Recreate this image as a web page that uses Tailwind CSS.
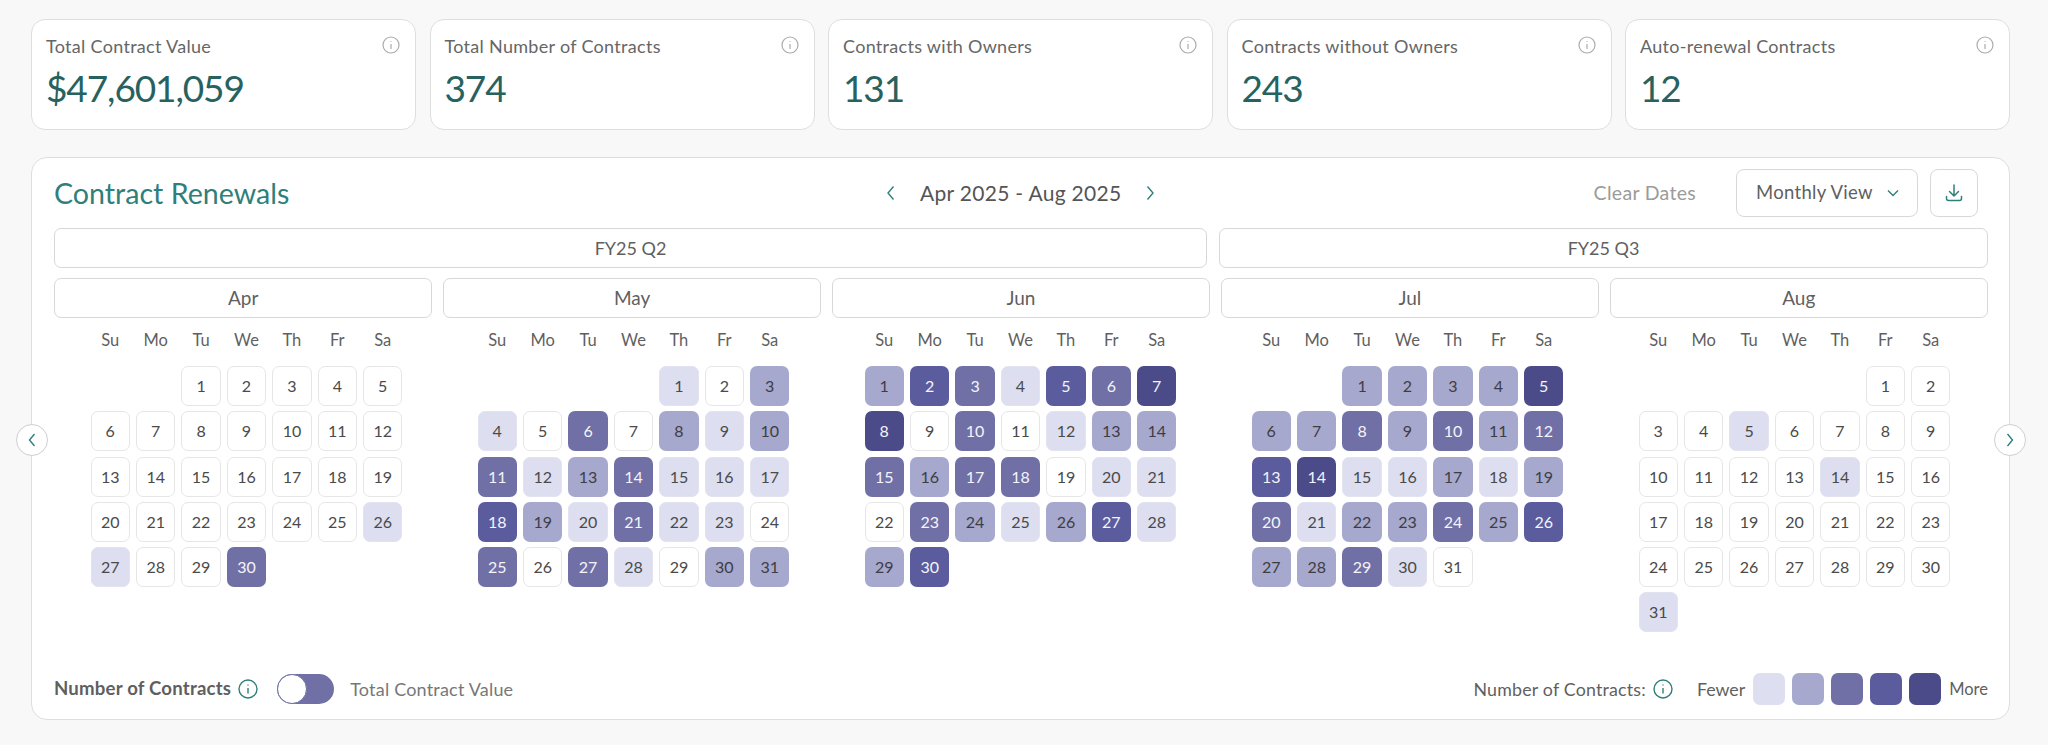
<!DOCTYPE html>
<html lang="en">
  <head>
    <meta charset="UTF-8" />
    <title>Contract Renewals</title>
    <script src="https://cdn.jsdelivr.net/npm/@tailwindcss/browser@4"></script>
  </head>
  <body class="h-[745px] overflow-hidden bg-[#f8f8f8] font-['Lato',sans-serif] text-[#5f5f5f]">
    <div class="relative w-[1979px] ml-[31px] pt-[19px]">
      <!-- Stat cards -->
      <div class="grid grid-cols-5 gap-[13.5px]">
        <div class="relative h-[111px] bg-white border border-[#dedede] rounded-[14px] pl-[14px] pt-[14px]">
          <p class="text-[18px] leading-[24px] tracking-[0.3px] text-[#666]">Total Contract Value</p>
          <p class="mt-[8px] text-[37px] leading-[44px] tracking-[-1.1px] text-[#27625f]">$47,601,059</p>
          <svg class="absolute right-[15px] top-[16px] w-[18px] h-[18px] text-[#ababab]" viewBox="0 0 18 18" fill="none" stroke="currentColor" stroke-width="1.2"><circle cx="9" cy="9" r="8"/><path d="M9 8v5M9 5v.8"/></svg>
        </div>
        <div class="relative h-[111px] bg-white border border-[#dedede] rounded-[14px] pl-[14px] pt-[14px]">
          <p class="text-[18px] leading-[24px] tracking-[0.3px] text-[#666]">Total Number of Contracts</p>
          <p class="mt-[8px] text-[37px] leading-[44px] tracking-[-1.1px] text-[#27625f]">374</p>
          <svg class="absolute right-[15px] top-[16px] w-[18px] h-[18px] text-[#ababab]" viewBox="0 0 18 18" fill="none" stroke="currentColor" stroke-width="1.2"><circle cx="9" cy="9" r="8"/><path d="M9 8v5M9 5v.8"/></svg>
        </div>
        <div class="relative h-[111px] bg-white border border-[#dedede] rounded-[14px] pl-[14px] pt-[14px]">
          <p class="text-[18px] leading-[24px] tracking-[0.3px] text-[#666]">Contracts with Owners</p>
          <p class="mt-[8px] text-[37px] leading-[44px] tracking-[-1.1px] text-[#27625f]">131</p>
          <svg class="absolute right-[15px] top-[16px] w-[18px] h-[18px] text-[#ababab]" viewBox="0 0 18 18" fill="none" stroke="currentColor" stroke-width="1.2"><circle cx="9" cy="9" r="8"/><path d="M9 8v5M9 5v.8"/></svg>
        </div>
        <div class="relative h-[111px] bg-white border border-[#dedede] rounded-[14px] pl-[14px] pt-[14px]">
          <p class="text-[18px] leading-[24px] tracking-[0.3px] text-[#666]">Contracts without Owners</p>
          <p class="mt-[8px] text-[37px] leading-[44px] tracking-[-1.1px] text-[#27625f]">243</p>
          <svg class="absolute right-[15px] top-[16px] w-[18px] h-[18px] text-[#ababab]" viewBox="0 0 18 18" fill="none" stroke="currentColor" stroke-width="1.2"><circle cx="9" cy="9" r="8"/><path d="M9 8v5M9 5v.8"/></svg>
        </div>
        <div class="relative h-[111px] bg-white border border-[#dedede] rounded-[14px] pl-[14px] pt-[14px]">
          <p class="text-[18px] leading-[24px] tracking-[0.3px] text-[#666]">Auto-renewal Contracts</p>
          <p class="mt-[8px] text-[37px] leading-[44px] tracking-[-1.1px] text-[#27625f]">12</p>
          <svg class="absolute right-[15px] top-[16px] w-[18px] h-[18px] text-[#ababab]" viewBox="0 0 18 18" fill="none" stroke="currentColor" stroke-width="1.2"><circle cx="9" cy="9" r="8"/><path d="M9 8v5M9 5v.8"/></svg>
        </div>
      </div>

      <!-- Contract Renewals panel -->
      <div class="relative mt-[27px] h-[563px] flex flex-col bg-white border border-[#dedede] rounded-[16px] pl-[22px] pr-[21px] pt-[11px] pb-[14px]">
        <div class="flex items-center h-[48px]">
          <h2 class="w-[828px] text-[28.6px] text-[#2f7f7b]">Contract Renewals</h2>
          <svg class="w-[18px] h-[20px] text-[#2f7f7b]" viewBox="0 0 18 20" fill="none" stroke="currentColor" stroke-width="1.4"><path d="M11.5 3.5 6 10l5.5 6.5"/></svg>
          <span class="ml-[20px] text-[21px] tracking-[0.3px] text-[#555]">Apr 2025 - Aug 2025</span>
          <svg class="ml-[20px] w-[18px] h-[20px] text-[#2f7f7b]" viewBox="0 0 18 20" fill="none" stroke="currentColor" stroke-width="1.4"><path d="M6.5 3.5 12 10l-5.5 6.5"/></svg>
          <span class="ml-auto text-[19.5px] tracking-[0.3px] text-[#9b9b9b]">Clear Dates</span>
          <div class="ml-[40px] w-[182px] h-[48px] flex items-center justify-between pl-[19px] pr-[17px] border border-[#d8d8d8] rounded-[8px]">
            <span class="text-[18.5px] tracking-[0.3px] text-[#5f5f5f]">Monthly View</span>
            <svg class="w-[14px] h-[14px] text-[#2f7f7b]" viewBox="0 0 14 14" fill="none" stroke="currentColor" stroke-width="1.4"><path d="m2 4.5 5 5 5-5"/></svg>
          </div>
          <div class="ml-[12px] mr-[10px] w-[48px] h-[48px] flex items-center justify-center border border-[#d8d8d8] rounded-[8px]">
            <svg class="w-[20px] h-[20px] text-[#2f7f7b]" viewBox="0 0 20 20" fill="none" stroke="currentColor" stroke-width="1.5" stroke-linecap="round" stroke-linejoin="round"><path d="M10 2v11M5.5 8.5 10 13l4.5-4.5M2.5 13.500v2a2 2 0 0 0 2 2h11a2 2 0 0 0 2-2v-2"/></svg>
          </div>
        </div>

        <div class="mt-[11px] grid grid-cols-[1153px_769px] gap-[12px] text-[18px] text-center">
          <div class="h-[40px] leading-[38px] border border-[#d8d8d8] rounded-[7px]">FY25 Q2</div>
          <div class="h-[40px] leading-[38px] border border-[#d8d8d8] rounded-[7px]">FY25 Q3</div>
        </div>
        <div class="mt-[10px] grid grid-cols-5 gap-[10.5px] text-[19px] text-center">
          <div class="h-[40px] leading-[38px] border border-[#d8d8d8] rounded-[7px]">Apr</div>
          <div class="h-[40px] leading-[38px] border border-[#d8d8d8] rounded-[7px]">May</div>
          <div class="h-[40px] leading-[38px] border border-[#d8d8d8] rounded-[7px]">Jun</div>
          <div class="h-[40px] leading-[38px] border border-[#d8d8d8] rounded-[7px]">Jul</div>
          <div class="h-[40px] leading-[38px] border border-[#d8d8d8] rounded-[7px]">Aug</div>
        </div>

        <!-- Month calendars, filled in below -->
        <div id="calendars" class="mt-[12px] pl-[36.5px] flex gap-[75px]"></div>

        <!-- Footer -->
        <div class="mt-auto flex items-center h-[32px]">
          <span class="text-[18.6px] font-bold tracking-[0.2px] text-[#5f5f5f]">Number of Contracts</span>
          <svg class="ml-[7px] w-[20px] h-[20px] text-[#2f7f7b]" viewBox="0 0 20 20" fill="none" stroke="currentColor" stroke-width="1.4"><circle cx="10" cy="10" r="9"/><path d="M10 9v5.5M10 5.5v.9"/></svg>
          <div class="ml-[19px] relative w-[57px] h-[30px] rounded-full bg-[#7070a6]">
            <div class="absolute left-0 top-0 w-[30px] h-[30px] rounded-full bg-white border border-[#7070a6]"></div>
          </div>
          <span class="ml-[16px] text-[18px] tracking-[0.2px] text-[#777]">Total Contract Value</span>
          <span class="ml-auto text-[17.8px] tracking-[0.2px] text-[#5f5f5f]">Number of Contracts:</span>
          <svg class="ml-[7px] w-[20px] h-[20px] text-[#2f7f7b]" viewBox="0 0 20 20" fill="none" stroke="currentColor" stroke-width="1.4"><circle cx="10" cy="10" r="9"/><path d="M10 9v5.5M10 5.5v.9"/></svg>
          <span class="ml-[24px] text-[17.8px] text-[#5f5f5f]">Fewer</span>
          <div class="ml-[8px] w-[32px] h-[32px] rounded-[7px] bg-[#dddeef]"></div>
          <div class="ml-[7px] w-[32px] h-[32px] rounded-[7px] bg-[#a6a8cd]"></div>
          <div class="ml-[7px] w-[32px] h-[32px] rounded-[7px] bg-[#7070a6]"></div>
          <div class="ml-[7px] w-[32px] h-[32px] rounded-[7px] bg-[#5b5c9e]"></div>
          <div class="ml-[7px] w-[32px] h-[32px] rounded-[7px] bg-[#4a4b88]"></div>
          <span class="ml-[8px] text-[16.5px] text-[#5f5f5f]">More</span>
        </div>

        <!-- Scroll buttons over the panel edge -->
        <div class="absolute left-[-16px] top-[266px] w-[32px] h-[32px] flex items-center justify-center bg-white border border-[#cfcfcf] rounded-full">
          <svg class="w-[16px] h-[18px] text-[#2f7f7b]" viewBox="0 0 16 18" fill="none" stroke="currentColor" stroke-width="1.4"><path d="M10.5 3 5.5 9l5 6"/></svg>
        </div>
        <div class="absolute right-[-17px] top-[266px] w-[32px] h-[32px] flex items-center justify-center bg-white border border-[#cfcfcf] rounded-full">
          <svg class="w-[16px] h-[18px] text-[#2f7f7b]" viewBox="0 0 16 18" fill="none" stroke="currentColor" stroke-width="1.4"><path d="m5.5 3 5 6-5 6"/></svg>
        </div>
      </div>
    </div>

    <script>
      // Cell styles by number of contracts
      const levels = [
        "bg-white border border-[#e6e6e6] text-[#4a4a4a]",
        "bg-[#dddeef] border border-[#e2e3f0] text-[#4a4a4a]",
        "bg-[#a6a8cd] text-[#3d3d45]",
        "bg-[#7070a6] text-[#f4f4fa]",
        "bg-[#5b5c9e] text-[#f4f4fa]",
        "bg-[#4a4b88] text-[#f4f4fa]",
      ];

      // offset = blank cells before the 1st, days = level of each day
      const months = [
        { offset: 2, days: [0,0,0,0,0, 0,0,0,0,0,0,0, 0,0,0,0,0,0,0, 0,0,0,0,0,0,1, 1,0,0,3] },
        { offset: 4, days: [1,0,2, 1,0,3,0,2,1,2, 3,1,2,3,1,1,1, 4,2,1,3,1,1,0, 3,0,3,1,0,2,2] },
        { offset: 0, days: [2,4,3,1,4,3,5, 5,0,3,0,1,2,2, 3,2,3,3,0,1,1, 0,3,2,1,2,4,1, 2,4] },
        { offset: 2, days: [2,2,2,2,5, 2,2,3,2,3,2,3, 4,5,1,1,2,1,2, 3,1,2,2,3,2,4, 2,2,3,1,0] },
        { offset: 5, days: [0,0, 0,0,1,0,0,0,0, 0,0,0,0,1,0,0, 0,0,0,0,0,0,0, 0,0,0,0,0,0,0, 1] },
      ];

      const weekdays = ["Su", "Mo", "Tu", "We", "Th", "Fr", "Sa"];
      const calendars = document.getElementById("calendars");

      months.forEach((month) => {
        const heads = weekdays
          .map((d) => `<div class="h-[20px] leading-[20px] text-center text-[16.5px] text-[#5f5f5f]">${d}</div>`)
          .join("");
        const blanks = "<div></div>".repeat(month.offset);
        const cells = month.days
          .map((level, i) => `<div class="h-[40px] rounded-[7px] flex items-center justify-center text-[16px] ${levels[level]}">${i + 1}</div>`)
          .join("");
        calendars.innerHTML += `
          <div class="w-[312px]">
            <div class="grid grid-cols-7 gap-x-[5.9px]">${heads}</div>
            <div class="mt-[16px] grid grid-cols-7 gap-x-[5.9px] gap-y-[5.3px]">${blanks}${cells}</div>
          </div>`;
      });
    </script>
  </body>
</html>
